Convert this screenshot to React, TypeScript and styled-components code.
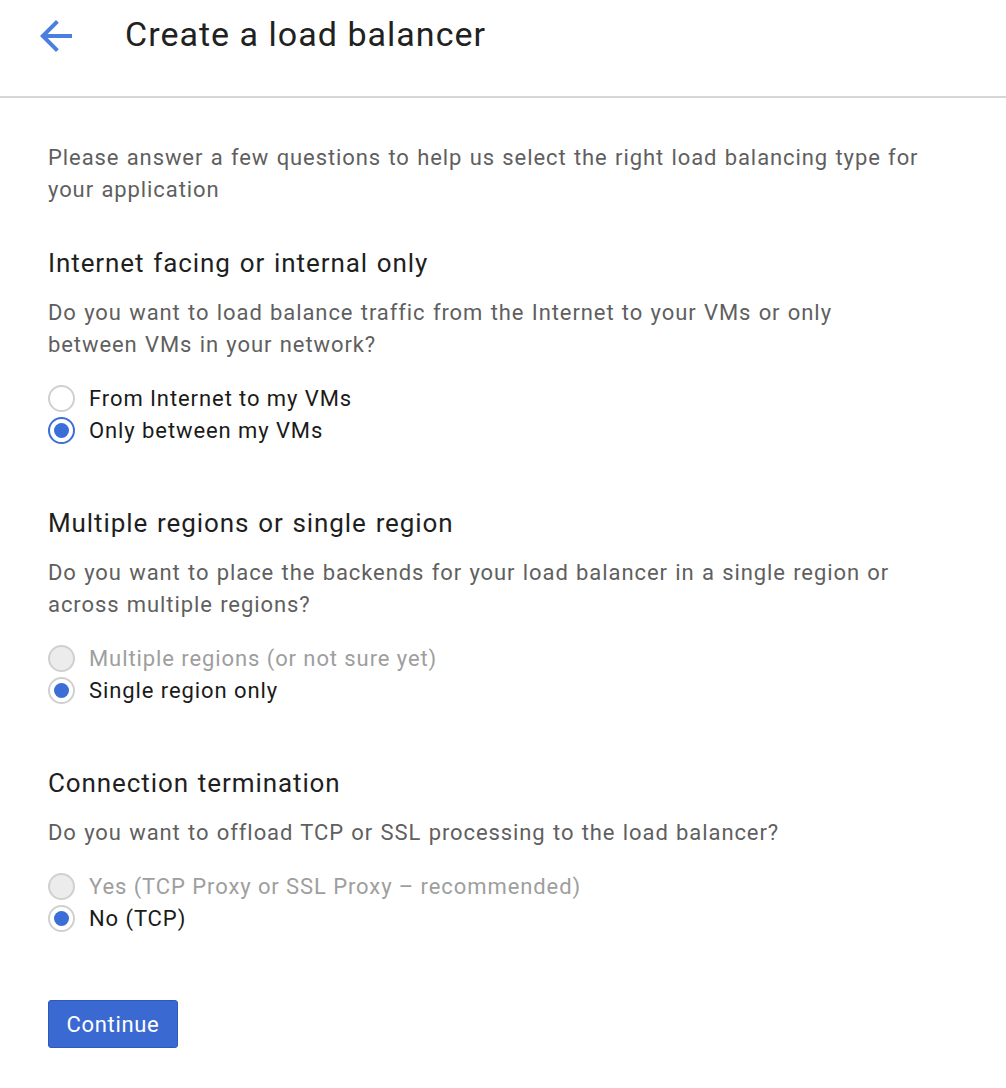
import styled, { createGlobalStyle } from "styled-components";
import { useState } from "react";

/* ===== GLOBAL ===== */

const GlobalStyle = createGlobalStyle`
  body {
    margin: 0;
    background: #fff;
    font-family: Roboto, "Liberation Sans", Arial, sans-serif;
    letter-spacing: 0.057em;
    color: #212121;
  }
`;

/* ===== HEADER ===== */

const Header = styled.header`
  height: 98px;
  box-sizing: border-box;
  border-bottom: 2px solid #d6d6d6;
  display: flex;
  align-items: flex-start;
  padding: 12px 0 0 32px;
  gap: 45px;
`;

const BackButton = styled.button`
  width: 48px;
  height: 48px;
  padding: 0;
  border: none;
  background: transparent;
  cursor: pointer;
  display: flex;
`;

const Title = styled.h1`
  margin: 0;
  font-size: 34px;
  font-weight: 400;
  line-height: 44px;
  letter-spacing: 0.03em;
  color: #212121;
`;

/* ===== CONTENT ===== */

const Main = styled.main`
  padding: 44px 48px 40px 48px;
`;

const Intro = styled.p`
  margin: 0;
  max-width: 900px;
  font-size: 22px;
  line-height: 32px;
  word-spacing: 1px;
  color: #5f5f5f;
`;

const Section = styled.section<{ $first?: boolean }>`
  margin-top: ${(p) => (p.$first ? "39px" : "59px")};
`;

const Heading = styled.h2`
  margin: 0;
  font-size: 26px;
  font-weight: 400;
  line-height: 36px;
  word-spacing: 1.5px;
  color: #1f1f1f;
`;

const Description = styled.p`
  margin: 16px 0 0;
  max-width: 860px;
  font-size: 22px;
  line-height: 32px;
  word-spacing: 1px;
  color: #5f5f5f;
`;

const Options = styled.div`
  margin-top: 21px;
  display: flex;
  flex-direction: column;
`;

const OptionRow = styled.label<{ $disabled?: boolean }>`
  display: flex;
  align-items: center;
  gap: 14px;
  height: 32px;
  font-size: 22px;
  color: ${(p) => (p.$disabled ? "#9e9e9e" : "#1a1a1a")};
  cursor: ${(p) => (p.$disabled ? "default" : "pointer")};
`;

const RadioCircle = styled.span<{ $checked: boolean; $disabled?: boolean }>`
  width: 27px;
  height: 27px;
  box-sizing: border-box;
  border-radius: 50%;
  border: 2px solid
    ${(p) => (p.$checked && !p.$disabled ? "#3b6ed6" : "#d0d0d0")};
  background: ${(p) => (p.$disabled && !p.$checked ? "#ececec" : "#fff")};
  display: flex;
  align-items: center;
  justify-content: center;
  flex: 0 0 auto;

  &::after {
    content: "";
    width: 15px;
    height: 15px;
    border-radius: 50%;
    background: #3b6ed6;
    display: ${(p) => (p.$checked ? "block" : "none")};
  }
`;

const ContinueButton = styled.button`
  margin-top: 66px;
  width: 130px;
  height: 48px;
  padding: 0;
  background: #3b69d2;
  border: 1px solid #2f59b8;
  border-radius: 3px;
  color: #fff;
  font-family: Roboto, "Liberation Sans", Arial, sans-serif;
  font-size: 22px;
  letter-spacing: 0.03em;
  cursor: pointer;
`;

/* ===== DATA ===== */

type Option = { label: string; disabled?: boolean };

type Question = {
  title: string;
  text: string;
  options: Option[];
  selected: number;
};

const questions: Question[] = [
  {
    title: "Internet facing or internal only",
    text: "Do you want to load balance traffic from the Internet to your VMs or only between VMs in your network?",
    options: [
      { label: "From Internet to my VMs" },
      { label: "Only between my VMs" },
    ],
    selected: 1,
  },
  {
    title: "Multiple regions or single region",
    text: "Do you want to place the backends for your load balancer in a single region or across multiple regions?",
    options: [
      { label: "Multiple regions (or not sure yet)", disabled: true },
      { label: "Single region only", disabled: true },
    ],
    selected: 1,
  },
  {
    title: "Connection termination",
    text: "Do you want to offload TCP or SSL processing to the load balancer?",
    options: [
      { label: "Yes (TCP Proxy or SSL Proxy – recommended)", disabled: true },
      { label: "No (TCP)", disabled: true },
    ],
    selected: 1,
  },
];

export default function App() {
  const [answers, setAnswers] = useState(questions.map((q) => q.selected));

  return (
    <>
      <GlobalStyle />
      <Header>
        <BackButton aria-label="Back">
          <svg width="48" height="48" viewBox="0 0 24 24">
            <path
              fill="#4a7fe0"
              d="M20 11H7.83l5.59-5.59L12 4l-8 8 8 8 1.41-1.41L7.83 13H20v-2z"
            />
          </svg>
        </BackButton>
        <Title>Create a load balancer</Title>
      </Header>

      <Main>
        <Intro>
          Please answer a few questions to help us select the right load
          balancing type for your application
        </Intro>

        {questions.map((q, qi) => (
          <Section key={q.title} $first={qi === 0}>
            <Heading>{q.title}</Heading>
            <Description>{q.text}</Description>
            <Options>
              {q.options.map((o, oi) => {
                const checked = answers[qi] === oi;
                const labelDisabled = o.disabled && !checked;
                return (
                  <OptionRow
                    key={o.label}
                    $disabled={labelDisabled}
                    onClick={() => {
                      if (o.disabled) return;
                      setAnswers((a) => a.map((v, i) => (i === qi ? oi : v)));
                    }}
                  >
                    <RadioCircle $checked={checked} $disabled={o.disabled} />
                    {o.label}
                  </OptionRow>
                );
              })}
            </Options>
          </Section>
        ))}

        <ContinueButton>Continue</ContinueButton>
      </Main>
    </>
  );
}
